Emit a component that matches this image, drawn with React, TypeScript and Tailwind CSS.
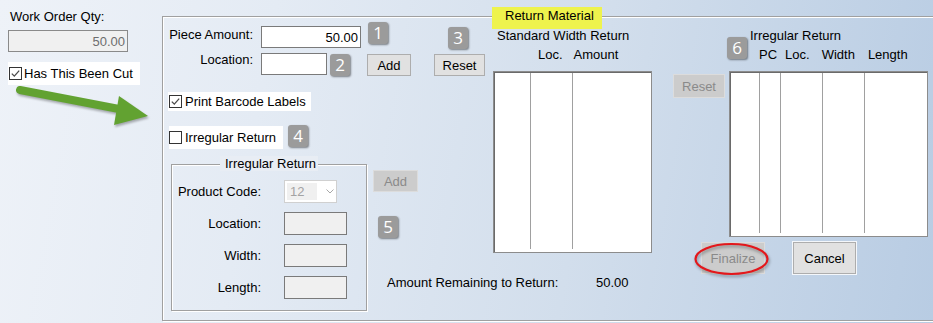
import React from "react";

function Badge({ n, className = "" }: { n: string; className?: string }) {
  return (
    <div
      className={`flex h-[22px] w-[20px] shrink-0 items-center justify-center rounded-[3px] bg-[#9b9b9b] pb-[1px] font-['Open_Sans',sans-serif] text-[17px] leading-none text-white shadow-[1px_1px_2px_rgba(0,0,0,0.45)] ${className}`}
    >
      {n}
    </div>
  );
}

function Check({ checked = false }: { checked?: boolean }) {
  return (
    <span className="flex h-[13px] w-[13px] shrink-0 items-center justify-center border border-[#333333] bg-white">
      {checked && (
        <svg width="11" height="11" viewBox="0 0 11 11">
          <path d="M1.8 5.6 L4.3 8.1 L9.2 2.6" fill="none" stroke="#4a4a4a" strokeWidth="1.3" />
        </svg>
      )}
    </span>
  );
}

export default function App() {
  return (
    <div className="relative flex h-[323px] w-[933px] overflow-hidden bg-[linear-gradient(100deg,#eef2f8_0%,#e4ebf4_28%,#d2deec_62%,#b8cce3_100%)] font-['Liberation_Sans',Arial,sans-serif] text-[13px] leading-[15px] text-black">
      {/* Left column */}
      <div className="flex w-[162px] shrink-0 flex-col pl-[8px] pt-[9px]">
        <div className="ml-[2px]">Work Order Qty:</div>
        <div className="mt-[6px] flex h-[22px] w-[120px] items-center justify-end border border-[#8a8a8a] bg-[#f0f0f0] pr-[2px] text-[#6d6d6d]">
          50.00
        </div>
        <div className="mt-[10px] flex h-[23px] w-[132px] items-center bg-white pl-[1px]">
          <Check checked />
          <span className="ml-[2px]">Has This Been Cut</span>
        </div>
      </div>

      {/* Return Material panel */}
      <div className="relative mt-[16px] h-[305px] w-[790px] shrink-0 border border-[#a0a0a0] shadow-[inset_1px_1px_0_#ffffff,1px_1px_0_#ffffff]">
        <div className="absolute left-[329px] top-[-10px] flex h-[22px] w-[110px] items-start bg-[#eef34d] pl-[13px] pt-[1px]">
          Return Material
        </div>

        <div className="flex h-full items-start">
          {/* Column A */}
          <div className="flex w-[328px] shrink-0 flex-col pl-[6px]">
            <div className="mt-[9px] flex h-[22px] items-start">
              <div className="w-[84px] pt-[1px] text-right">Piece Amount:</div>
              <div className="ml-[8px] flex h-[22px] w-[100px] items-center justify-end border border-[#7a7a7a] bg-white pr-[2px]">
                50.00
              </div>
              <Badge n="1" className="ml-[7px] -mt-[4px]" />
              <Badge n="3" className="ml-[60px] mt-[1px]" />
            </div>

            <div className="mt-[5px] flex h-[22px] items-start">
              <div className="-mt-[1px] w-[84px] text-right">Location:</div>
              <div className="ml-[8px] h-[22px] w-[66px] border border-[#7a7a7a] bg-white" />
              <Badge n="2" className="ml-[3px] mt-[1px]" />
              <div className="ml-[17px] mt-[1px] flex h-[22px] w-[44px] items-center justify-center border border-[#adadad] bg-[#e1e1e1]">
                Add
              </div>
              <div className="ml-[23px] mt-[1px] flex h-[22px] w-[51px] items-center justify-center border border-[#adadad] bg-[#e1e1e1]">
                Reset
              </div>
            </div>

            <div className="-ml-[1px] mt-[17px] flex h-[19px] w-[143px] items-center bg-white pl-[1px]">
              <Check checked />
              <span className="ml-[3px]">Print Barcode Labels</span>
            </div>

            <div className="mt-[15px] flex items-start">
              <div className="flex h-[23px] w-[114px] items-center bg-white">
                <Check />
                <span className="ml-[3px]">Irregular Return</span>
              </div>
              <Badge n="4" className="ml-[5px] -mt-[1px]" />
            </div>

            <div className="mt-[15px] flex items-start">
              {/* Irregular Return group box */}
              <div className="relative ml-[2px] h-[147px] w-[196px] shrink-0 border border-[#a0a0a0] shadow-[inset_1px_1px_0_#ffffff,1px_1px_0_#ffffff]">
                <div className="absolute left-[48px] top-[-9px] h-[15px] w-[98px] bg-[#e8edf4] pl-[5px]">
                  Irregular Return
                </div>
                <div className="flex flex-col">
                  <div className="mt-[15px] flex items-center">
                    <div className="w-[89px] text-right">Product Code:</div>
                    <div className="ml-[23px] flex h-[23px] w-[53px] items-center border border-[#d0d0d0] bg-white p-[2px]">
                      <div className="flex h-full w-[30px] items-center bg-[#f0f0f0] pl-[3px] text-[#a3a3a3]">12</div>
                      <svg className="ml-[9px]" width="8" height="5" viewBox="0 0 8 5">
                        <path d="M0.5 0.5 L4 4 L7.5 0.5" stroke="#a8a8a8" fill="none" />
                      </svg>
                    </div>
                  </div>
                  <div className="mt-[9px] flex items-center">
                    <div className="w-[89px] text-right">Location:</div>
                    <div className="ml-[23px] h-[23px] w-[63px] border border-[#7a7a7a] bg-[#f0f0f0]" />
                  </div>
                  <div className="mt-[9px] flex items-center">
                    <div className="w-[89px] text-right">Width:</div>
                    <div className="ml-[23px] h-[23px] w-[63px] border border-[#7a7a7a] bg-[#f0f0f0]" />
                  </div>
                  <div className="mt-[9px] flex items-center">
                    <div className="w-[89px] text-right">Length:</div>
                    <div className="ml-[23px] h-[23px] w-[63px] border border-[#7a7a7a] bg-[#f0f0f0]" />
                  </div>
                </div>
              </div>

              <div className="ml-[6px] flex flex-col">
                <div className="mt-[6px] flex h-[22px] w-[45px] items-center justify-center border border-[#dcdcdc] bg-[#cccccc] text-[#8a8a8a]">
                  Add
                </div>
                <Badge n="5" className="ml-[5px] mt-[24px]" />
                <div className="ml-[14px] mt-[37px] flex whitespace-nowrap">
                  <span className="w-[209px]">Amount Remaining to Return:</span>
                  <span>50.00</span>
                </div>
              </div>
            </div>
          </div>

          {/* Column B: Standard Width Return */}
          <div className="flex w-[160px] shrink-0 flex-col pt-[11px]">
            <div className="whitespace-nowrap pl-[6px]">Standard Width Return</div>
            <div className="mt-[4px] flex">
              <span className="ml-[47px]">Loc.</span>
              <span className="ml-[11px]">Amount</span>
            </div>
            <div className="ml-[2px] mt-[9px] flex h-[182px] w-[159px] border border-[#8c8c8c] bg-white shadow-[inset_1px_1px_0_#6a6a6a,inset_-1px_-1px_0_#ffffff] p-[1px]">
              <div className="h-[calc(100%-2px)] w-[36px] border-r border-[#a0a0a0]" />
              <div className="h-[calc(100%-2px)] w-[42px] border-r border-[#a0a0a0]" />
              <div className="flex-1" />
            </div>
          </div>

          {/* Right part */}
          <div className="flex flex-col">
            <div className="flex items-start">
              <div className="w-[78px] shrink-0">
                <div className="ml-[22px] mt-[57px] flex h-[24px] w-[52px] items-center justify-center border border-[#dcdcdc] bg-[#cccccc] text-[#8a8a8a]">
                  Reset
                </div>
              </div>
              <div className="flex flex-col">
                <div className="flex items-start">
                  <Badge n="6" className="-ml-[2px] mt-[20px]" />
                  <div className="ml-[3px] flex flex-col whitespace-nowrap pt-[11px]">
                    <div>Irregular Return</div>
                    <div className="mt-[4px] flex">
                      <span className="ml-[9px]">PC</span>
                      <span className="ml-[8px]">Loc.</span>
                      <span className="ml-[12px]">Width</span>
                      <span className="ml-[13px]">Length</span>
                    </div>
                  </div>
                </div>
                <div className="mt-[9px] flex h-[166px] w-[199px] border border-[#8c8c8c] bg-white p-[1px] shadow-[inset_1px_1px_0_#6a6a6a,inset_-1px_-1px_0_#ffffff]">
                  <div className="h-[calc(100%-2px)] w-[29px] border-r border-[#a0a0a0]" />
                  <div className="h-[calc(100%-2px)] w-[21px] border-r border-[#a0a0a0]" />
                  <div className="h-[calc(100%-2px)] w-[42px] border-r border-[#a0a0a0]" />
                  <div className="h-[calc(100%-2px)] w-[42px] border-r border-[#a0a0a0]" />
                  <div className="flex-1" />
                </div>
              </div>
            </div>
            <div className="mt-[5px] flex">
              <div className="ml-[50px] flex h-[32px] w-[64px] items-center justify-center border border-[#dcdcdc] bg-[#cccccc] text-[#8a8a8a]">
                Finalize
              </div>
              <div className="ml-[28px] flex h-[32px] w-[63px] items-center justify-center border border-[#adadad] bg-[#e1e1e1] shadow-[0_0_0_1px_#f4f7fb]">
                Cancel
              </div>
            </div>
          </div>
        </div>
      </div>

      {/* Annotations */}
      <svg
        className="pointer-events-none absolute left-0 top-0 drop-shadow-[1px_2px_1px_rgba(0,0,0,0.3)]"
        width="160"
        height="140"
        viewBox="0 0 160 140"
      >
        <line x1="20" y1="90" x2="119" y2="109" stroke="#62a231" strokeWidth="8" strokeLinecap="round" />
        <polygon points="119,96 148,116 114,125" fill="#62a231" />
      </svg>
      <svg
        className="pointer-events-none absolute left-[688px] top-[236px] drop-shadow-[1px_2px_1.5px_rgba(0,0,0,0.35)]"
        width="90"
        height="46"
        viewBox="0 0 90 46"
      >
        <ellipse cx="43.5" cy="23" rx="36" ry="15" fill="none" stroke="#e3171b" strokeWidth="2.2" />
      </svg>
    </div>
  );
}
